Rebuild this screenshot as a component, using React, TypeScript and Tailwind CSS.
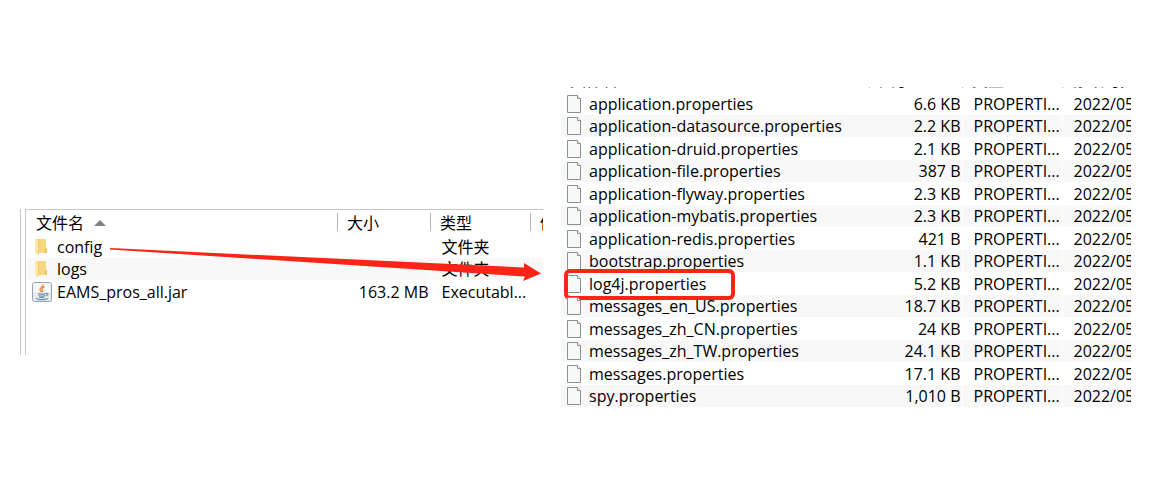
import type { ReactNode } from "react";

type Entry = {
  name: string;
  kind: "folder" | "jar" | "file";
  size: string;
  type: string;
  modified?: string;
  highlighted?: boolean;
};

const localFiles: Entry[] = [
  { name: "config", kind: "folder", size: "", type: "文件夹" },
  { name: "logs", kind: "folder", size: "", type: "文件夹" },
  { name: "EAMS_pros_all.jar", kind: "jar", size: "163.2 MB", type: "Executabl..." },
];

const property = (name: string, size: string, highlighted = false): Entry => ({
  name: `${name}.properties`,
  kind: "file",
  size,
  type: "PROPERTI...",
  modified: "2022/05",
  highlighted,
});

const configFiles: Entry[] = [
  property("application", "6.6 KB"),
  property("application-datasource", "2.2 KB"),
  property("application-druid", "2.1 KB"),
  property("application-file", "387 B"),
  property("application-flyway", "2.3 KB"),
  property("application-mybatis", "2.3 KB"),
  property("application-redis", "421 B"),
  property("bootstrap", "1.1 KB"),
  property("log4j", "5.2 KB", true),
  property("messages_en_US", "18.7 KB"),
  property("messages_zh_CN", "24 KB"),
  property("messages_zh_TW", "24.1 KB"),
  property("messages", "17.1 KB"),
  property("spy", "1,010 B"),
];

function FolderIcon() {
  return (
    <svg width="20" height="20" viewBox="0 0 20 20" aria-hidden="true">
      <path d="M4 2h10v14H4z" fill="#f6d77f" />
      <path d="M13 11h2v5h-2z" fill="#ecc663" />
      <path d="M3 2l3 2v14l-1 .5L3 16z" fill="#fce8ab" />
      <path d="M6.500 4v13" stroke="#edcb70" />
    </svg>
  );
}

function JarIcon() {
  return (
    <svg width="20" height="20" viewBox="0 0 20 20" aria-hidden="true">
      <rect x="0.5" y="0.5" width="19" height="19" rx="2" fill="#e6eaed" stroke="#94a6b5" />
      <path d="M1.500 1.500h17v9h-17z" fill="#f6f8f9" />
      <path
        d="M11 2.500c1 2-3 3-3 5 0 1 1 2 2 3M12.500 5c-3 1-3 2-2 3 .6.8.3 1.500-.5 2"
        fill="none"
        stroke="#f08b4b"
        strokeWidth="1.4"
      />
      <path
        d="M6 11.500c2 .8 6 .8 8 0M6.500 13.500c2 .8 5 .8 6.500 0M7 15c2 .7 4 .7 5.500 0M4 16.500c3 1.500 9 1.500 12 0M14 11.500c3-.5 2.500 2-.5 2.500"
        fill="none"
        stroke="#7593ab"
        strokeWidth="1.2"
      />
    </svg>
  );
}

function FileIcon() {
  return (
    <svg width="14" height="18" viewBox="0 0 14 18" aria-hidden="true">
      <path d="M.5.5h10l3 3v14H.5z" fill="#f7f9f9" stroke="#8f8f8f" />
      <path d="M10.500.5v3h3" fill="#fff" stroke="#8f8f8f" />
    </svg>
  );
}

const icons: Record<Entry["kind"], ReactNode> = {
  folder: <FolderIcon />,
  jar: <JarIcon />,
  file: <FileIcon />,
};

function FileRow({ entry }: { entry: Entry }) {
  const isFile = entry.kind === "file";
  return (
    <tr className="h-[23px] even:h-[22px] even:bg-[#f8f8f8]">
      <td className="relative p-0">
        <div className="flex h-[22px] items-center">
          <span className={isFile ? "w-7 shrink-0 pl-[6px]" : "w-[30px] shrink-0 pl-[5px]"}>
            {icons[entry.kind]}
          </span>
          {entry.name}
        </div>
        {entry.highlighted && (
          <span className="absolute -top-[3px] left-[3px] h-[31px] w-[171px] rounded-md border-4 border-[#fb2417]" />
        )}
      </td>
      <td className="border-r border-white p-0 pr-px text-right">{entry.size}</td>
      <td className="border-r border-white p-0 pl-[11px]">{entry.type}</td>
      <td className="p-0 pl-[11px]">{entry.modified}</td>
    </tr>
  );
}

function HeaderCell({ children }: { children: ReactNode }) {
  return (
    <th className="overflow-hidden p-0 pt-[3px] text-left align-top font-normal">
      <div className="h-[18px] border-l border-[#b4b4b4] pl-[9px] leading-5">{children}</div>
    </th>
  );
}

function FileTable({ entries, children }: { entries: Entry[]; children: ReactNode }) {
  return (
    <table className="w-full table-fixed border-collapse">
      {children}
      <thead>
        <tr className="h-[25px]">
          <th className="p-0 pt-[3px] pl-[9px] text-left align-top font-normal">
            <div className="flex items-center gap-[10px] leading-5">
              文件名
              <svg width="12" height="6" viewBox="0 0 12 6" aria-hidden="true">
                <path d="M0 6l6-6 6 6z" fill="#808080" />
              </svg>
            </div>
          </th>
          <HeaderCell>大小</HeaderCell>
          <HeaderCell>类型</HeaderCell>
          <HeaderCell>修改时间</HeaderCell>
        </tr>
      </thead>
      <tbody>
        {entries.map((entry) => (
          <FileRow key={entry.name} entry={entry} />
        ))}
      </tbody>
    </table>
  );
}

function LocalPanel() {
  return (
    <section className="relative mt-[209px] h-[146px] min-w-0 flex-[518] border-l border-[#c8c8c8] pl-1">
      <div className="h-full overflow-hidden border-t border-l border-[#c8c8c8] pl-px">
        <FileTable entries={localFiles}>
          <colgroup>
            <col />
            <col className="w-[93px]" />
            <col className="w-[100px]" />
            <col className="w-[13px]" />
          </colgroup>
        </FileTable>
      </div>
      {/* Arrow from the config folder to its contents */}
      <svg className="absolute top-[38px] left-[89px] w-[434px]" height="38" viewBox="0 0 434 38" aria-hidden="true">
        <path d="M0 1L414 20.5V16l17 10.500L413 34l2-4.500L0 2.500z" fill="#fb2417" />
      </svg>
    </section>
  );
}

function ConfigPanel() {
  return (
    <section className="mt-[87px] min-w-0 flex-[570] overflow-hidden">
      {/* The list is scrolled so that only the foot of its header shows */}
      <div className="-mt-5">
        <FileTable entries={configFiles}>
          <colgroup>
            <col />
            <col className="w-[93px]" />
            <col className="w-[100px]" />
            <col className="w-[69px]" />
          </colgroup>
        </FileTable>
      </div>
    </section>
  );
}

export default function App() {
  return (
    <main className="flex items-start gap-[18px] bg-white pr-[18px] pl-5 font-['Open_Sans','Noto_Sans_CJK_SC',sans-serif] text-base leading-[22px] whitespace-nowrap text-black">
      <LocalPanel />
      <ConfigPanel />
    </main>
  );
}
